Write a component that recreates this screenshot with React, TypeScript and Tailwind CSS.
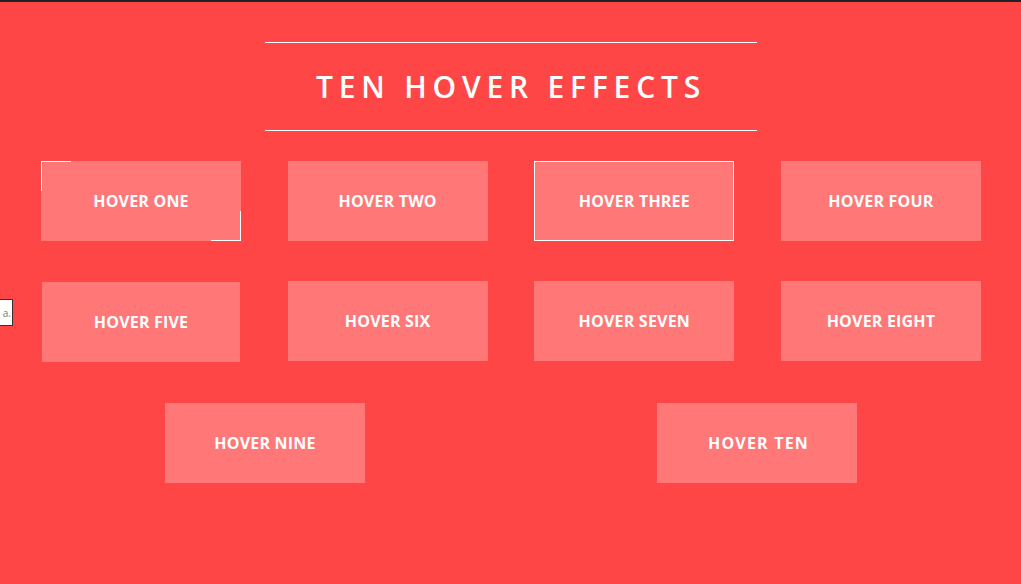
const font = { fontFamily: '"Open Sans", "Liberation Sans", sans-serif' }

type Variant = 'plain' | 'corners' | 'framed' | 'shifted' | 'wide'

const topRows: { label: string; variant: Variant }[][] = [
  [
    { label: 'HOVER ONE', variant: 'corners' },
    { label: 'HOVER TWO', variant: 'plain' },
    { label: 'HOVER THREE', variant: 'framed' },
    { label: 'HOVER FOUR', variant: 'plain' },
  ],
  [
    { label: 'HOVER FIVE', variant: 'shifted' },
    { label: 'HOVER SIX', variant: 'plain' },
    { label: 'HOVER SEVEN', variant: 'plain' },
    { label: 'HOVER EIGHT', variant: 'plain' },
  ],
]

function HoverButton({ label, variant }: { label: string; variant: Variant }) {
  return (
    <div
      className={
        'relative flex h-20 shrink-0 items-center justify-center bg-[#ff7777] text-white ' +
        (variant === 'shifted' ? 'mx-px w-[198px] translate-y-px ' : 'w-[200px] ') +
        (variant === 'framed' ? 'outline outline-1 -outline-offset-1 outline-white ' : '') +
        (variant === 'wide' ? 'pl-[3px] ' : '')
      }
    >
      {variant === 'corners' && (
        <>
          <span className="absolute left-0 top-0 h-[30px] w-[30px] border-l border-t border-white" />
          <span className="absolute bottom-0 right-0 h-[30px] w-[30px] border-b border-r border-white" />
        </>
      )}
      <span
        className={
          'text-[16px] font-bold ' + (variant === 'wide' ? 'tracking-[1.2px]' : 'tracking-[0.2px]')
        }
      >
        {label}
      </span>
    </div>
  )
}

export default function App() {
  return (
    <div className="relative min-h-[584px] border-t-2 border-[#222] bg-[#ff4646]" style={font}>
      {/* tooltip stub poking in from the left edge */}
      <div className="absolute left-[-13px] top-[297px] flex h-[27px] w-[26px] items-center justify-end border border-[#333] bg-white pr-[1px] text-[10px] leading-none text-[#777]">
        a.
      </div>

      <header className="mx-auto mt-[40px] w-[492px] border-y border-white pb-[23px] pt-[24px] text-center">
        <h1 className="pl-px text-[30px] font-semibold leading-[40px] tracking-[5.8px] text-white">
          TEN HOVER EFFECTS
        </h1>
      </header>

      <div className="mt-[30px] flex flex-col gap-[40px]">
        {topRows.map((row, i) => (
          <div key={i} className="ml-[41px] flex w-[940px] justify-between">
            {row.map((b) => (
              <HoverButton key={b.label} label={b.label} variant={b.variant} />
            ))}
          </div>
        ))}
        <div className="ml-[165px] mt-[2px] flex gap-[292px]">
          <HoverButton label="HOVER NINE" variant="plain" />
          <HoverButton label="HOVER TEN" variant="wide" />
        </div>
      </div>
    </div>
  )
}
